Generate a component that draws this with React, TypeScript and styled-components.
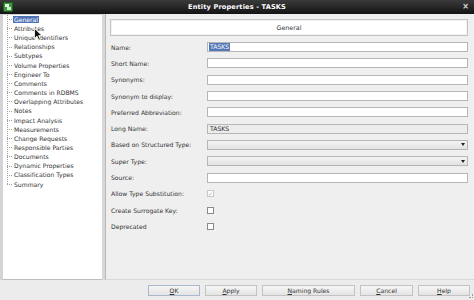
import styled, { createGlobalStyle } from 'styled-components';

const Global = createGlobalStyle`
  html, body { margin: 0; padding: 0; background: #ececec; }
  body { font-family: "DejaVu Sans", "Liberation Sans", sans-serif; }
`;

const treeItems = [
  'General', 'Attributes', 'Unique Identifiers', 'Relationships', 'Subtypes',
  'Volume Properties', 'Engineer To', 'Comments', 'Comments in RDBMS',
  'Overlapping Attributes', 'Notes', 'Impact Analysis', 'Measurements',
  'Change Requests', 'Responsible Parties', 'Documents', 'Dynamic Properties',
  'Classification Types', 'Summary',
];

type Field = {
  label: string;
  kind: 'text' | 'select' | 'check';
  value?: string;
  selected?: boolean;
  readOnly?: boolean;
  checked?: boolean;
  disabled?: boolean;
};

const fields: Field[] = [
  { label: 'Name:', kind: 'text', value: 'TASKS', selected: true },
  { label: 'Short Name:', kind: 'text' },
  { label: 'Synonyms:', kind: 'text' },
  { label: 'Synonym to display:', kind: 'text' },
  { label: 'Preferred Abbreviation:', kind: 'text' },
  { label: 'Long Name:', kind: 'text', value: 'TASKS', readOnly: true },
  { label: 'Based on Structured Type:', kind: 'select' },
  { label: 'Super Type:', kind: 'select' },
  { label: 'Source:', kind: 'text' },
  { label: 'Allow Type Substitution:', kind: 'check', checked: true, disabled: true },
  { label: 'Create Surrogate Key:', kind: 'check' },
  { label: 'Deprecated', kind: 'check' },
];

const buttons = [
  { text: 'OK', w: 52, focus: true },
  { text: 'Apply', w: 52 },
  { text: 'Naming Rules', w: 93 },
  { text: 'Cancel', w: 53 },
  { text: 'Help', w: 52 },
];

function AppIcon() {
  return (
    <svg width="10" height="10" viewBox="0 0 10 10">
      <rect x="0.5" y="0.5" width="9" height="9" rx="1" fill="#3c9a3c" stroke="#1f5e1f" />
      <rect x="2" y="2" width="4" height="3" fill="#e8f5e8" />
      <rect x="4" y="5" width="4" height="3" fill="#cfe9cf" />
    </svg>
  );
}

function Cursor() {
  return (
    <svg width="9" height="13" viewBox="0 0 9 13">
      <path d="M0.5 0.5 L0.5 10.5 L3 8.2 L4.8 12.2 L6.4 11.5 L4.6 7.6 L8 7.6 Z" fill="#111" stroke="#fff" strokeWidth="0.8" />
    </svg>
  );
}

function Mnemonic({ text }: { text: string }) {
  return (
    <>
      <u>{text[0]}</u>
      {text.slice(1)}
    </>
  );
}

export default function App() {
  return (
    <>
      <Global />
      <Window>
        <TitleBar>
          <IconSlot><AppIcon /></IconSlot>
          <Title>Entity Properties - TASKS</Title>
          <Close>×</Close>
        </TitleBar>
        <Main>
          <TreePane>
            <TreeLine />
            {treeItems.map((t, i) => (
              <TreeRow key={t}>
                <Tick />
                <TreeLabel $selected={i === 0}>{t}</TreeLabel>
              </TreeRow>
            ))}
            <CursorSpot><Cursor /></CursorSpot>
          </TreePane>
          <Splitter />
          <ContentPane>
            <HeaderBox>General</HeaderBox>
            <Form>
              {fields.map((f) => (
                <Row key={f.label}>
                  <Label>{f.label}</Label>
                  {f.kind === 'text' && (
                    <TextBox $readOnly={f.readOnly}>
                      {f.value && <Value $selected={f.selected}>{f.value}</Value>}
                    </TextBox>
                  )}
                  {f.kind === 'select' && (
                    <SelectBox>
                      <Arrow />
                    </SelectBox>
                  )}
                  {f.kind === 'check' && (
                    <Check $disabled={f.disabled}>{f.checked ? '✓' : ''}</Check>
                  )}
                </Row>
              ))}
            </Form>
          </ContentPane>
        </Main>
        <ButtonBar>
          {buttons.map((b) => (
            <Button key={b.text} $w={b.w} $focus={b.focus}>
              <Mnemonic text={b.text} />
            </Button>
          ))}
          <Grip />
        </ButtonBar>
      </Window>
    </>
  );
}

const Window = styled.div`
  width: 474px;
  height: 300px;
  display: flex;
  flex-direction: column;
  background: #ececec;
  overflow: hidden;
  position: relative;
`;

const TitleBar = styled.div`
  height: 14px;
  flex: none;
  display: flex;
  align-items: center;
  background: linear-gradient(#3a3a3a, #141414);
  position: relative;
`;

const IconSlot = styled.div`
  width: 10px;
  height: 10px;
  margin-left: 3px;
  display: flex;
`;

const Title = styled.div`
  position: absolute;
  left: 0;
  right: 0;
  text-align: center;
  color: #fff;
  font-weight: bold;
  font-size: 6.6px;
  letter-spacing: 0.15px;
  line-height: 14px;
`;

const Close = styled.div`
  margin-left: auto;
  margin-right: 5px;
  color: #ddd;
  font-size: 8px;
  font-weight: bold;
  line-height: 14px;
`;

const Main = styled.div`
  height: 266px;
  flex: none;
  display: flex;
  background: #d4d4d4;
  padding-left: 3px;
`;

const TreePane = styled.div`
  width: 99px;
  background: #fff;
  margin-top: 1px;
  position: relative;
  border-bottom: 1px solid #bdbdbd;
`;

const TreeLine = styled.div`
  position: absolute;
  left: 4px;
  top: 0;
  height: 169px;
  border-left: 1px dotted #a0a0a0;
`;

const TreeRow = styled.div`
  height: 9.17px;
  display: flex;
  align-items: center;
`;

const Tick = styled.div`
  width: 5px;
  margin-left: 4px;
  border-top: 1px dotted #a0a0a0;
`;

const TreeLabel = styled.div<{ $selected?: boolean }>`
  margin-left: 1px;
  padding: 0 1px;
  font-size: 6.1px;
  line-height: 7.5px;
  color: ${(p) => (p.$selected ? '#fff' : '#333')};
  background: ${(p) => (p.$selected ? '#4d72b6' : 'transparent')};
  white-space: nowrap;
`;

const CursorSpot = styled.div`
  position: absolute;
  left: 31px;
  top: 11px;
`;

const Splitter = styled.div`
  width: 3px;
  background: #d8d8d8;
`;

const ContentPane = styled.div`
  flex: 1;
  background: #efefef;
  border-left: 1px solid #b8b8b8;
  border-bottom: 1px solid #d8d8d8;
  padding: 5px 6px 0 4px;
`;

const HeaderBox = styled.div`
  height: 15px;
  background: #fff;
  border: 1px solid #c4c4c4;
  box-shadow: inset 0 0 0 1px #f2f2f2;
  display: flex;
  align-items: center;
  justify-content: center;
  font-size: 6.3px;
  color: #333;
`;

const Form = styled.div`
  margin-top: 3px;
  display: grid;
  grid-auto-rows: 16.3px;
`;

const Row = styled.div`
  display: grid;
  grid-template-columns: 96px 1fr;
  align-items: center;
  padding-left: 1px;
`;

const Label = styled.div`
  font-size: 6.1px;
  color: #333;
  white-space: nowrap;
`;

const TextBox = styled.div<{ $readOnly?: boolean }>`
  height: 10px;
  box-sizing: border-box;
  border: 1px solid #b6b6b6;
  background: ${(p) => (p.$readOnly ? '#ececec' : '#fff')};
  display: flex;
  align-items: center;
  padding-left: 1px;
`;

const Value = styled.span<{ $selected?: boolean }>`
  font-size: 6.1px;
  line-height: 8px;
  padding: 0 1px;
  color: ${(p) => (p.$selected ? '#fff' : '#222')};
  background: ${(p) => (p.$selected ? '#5478b8' : 'transparent')};
`;

const SelectBox = styled.div`
  height: 10px;
  box-sizing: border-box;
  border: 1px solid #b6b6b6;
  background: linear-gradient(#f4f4f4, #e2e2e2);
  display: flex;
  align-items: center;
  justify-content: flex-end;
  padding-right: 2px;
`;

const Arrow = styled.div`
  width: 0;
  height: 0;
  border-left: 2.5px solid transparent;
  border-right: 2.5px solid transparent;
  border-top: 3px solid #222;
`;

const Check = styled.div<{ $disabled?: boolean }>`
  width: 7px;
  height: 7px;
  box-sizing: border-box;
  border: 1px solid ${(p) => (p.$disabled ? '#c8c8c8' : '#8a8a8a')};
  background: #fff;
  color: #aaa;
  font-size: 6px;
  line-height: 5px;
  text-align: center;
`;

const ButtonBar = styled.div`
  flex: 1;
  display: flex;
  align-items: center;
  justify-content: flex-end;
  gap: 5px;
  padding-right: 4px;
  padding-top: 1px;
  position: relative;
`;

const Button = styled.div<{ $w: number; $focus?: boolean }>`
  width: ${(p) => p.$w}px;
  height: 11px;
  box-sizing: border-box;
  border: 1px solid ${(p) => (p.$focus ? '#a9b8cc' : '#c2c2c2')};
  background: linear-gradient(#f6f6f6, #e4e4e4);
  display: flex;
  align-items: center;
  justify-content: center;
  font-size: 6.1px;
  color: #333;
  u { text-decoration-thickness: 0.5px; text-underline-offset: 1px; }
`;

const Grip = styled.div`
  position: absolute;
  right: 1px;
  bottom: 2px;
  width: 3px;
  height: 3px;
  border-right: 1px dotted #999;
  border-bottom: 1px dotted #999;
`;
